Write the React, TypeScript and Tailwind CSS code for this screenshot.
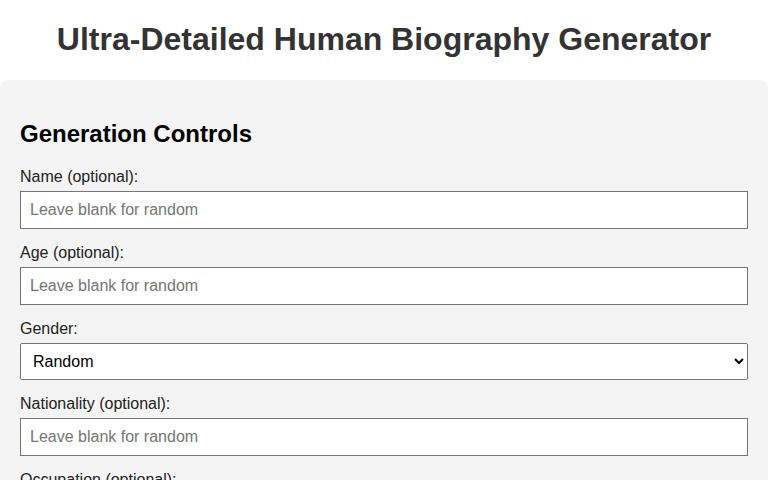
import React from "react"

const fields = [
  { label: "Name (optional):", type: "input" },
  { label: "Age (optional):", type: "input" },
  { label: "Gender:", type: "select" },
  { label: "Nationality (optional):", type: "input" },
  { label: "Occupation (optional):", type: "input" },
]

export default function App() {
  return (
    <div className="min-h-screen bg-white font-['Liberation_Sans',Arial,sans-serif] text-[#222]">
      <h1 className="pt-[21px] pb-[22px] text-center text-[32px] leading-[37px] font-bold text-[#333]">
        Ultra-Detailed Human Biography Generator
      </h1>

      <div className="rounded-lg bg-[#f4f4f4] p-5">
        <h2 className="my-5 text-[24px] leading-[28px] font-bold text-black">Generation Controls</h2>

        {fields.map((f) => (
          <div key={f.label} className="mb-[15px]">
            <label className="mb-[5px] block text-base leading-[18px] text-[#222]">{f.label}</label>
            {f.type === "select" ? (
              <select
                defaultValue="Random"
                className="h-[37px] w-full rounded-[2px] border border-[#767676] bg-white px-2 text-base text-black"
              >
                <option>Random</option>
                <option>Male</option>
                <option>Female</option>
                <option>Non-binary</option>
              </select>
            ) : (
              <input
                type="text"
                placeholder="Leave blank for random"
                className="block h-[38px] w-full border border-[#767676] bg-white px-[9px] text-base text-black placeholder:text-[#757575]"
              />
            )}
          </div>
        ))}
      </div>
    </div>
  )
}
